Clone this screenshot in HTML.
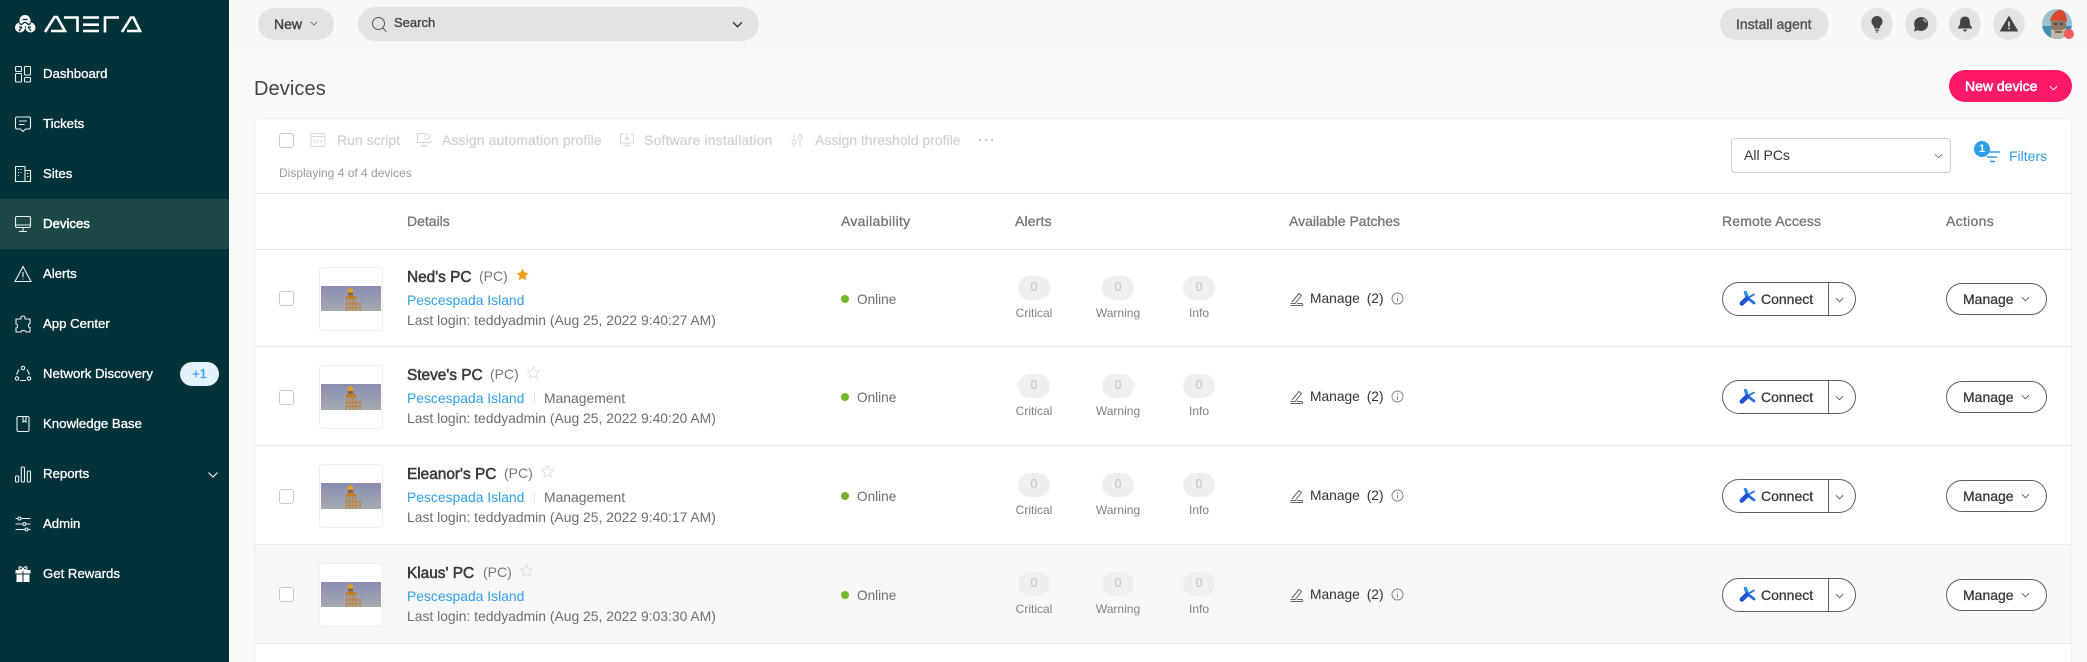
<!DOCTYPE html>
<html lang="en"><head><meta charset="utf-8"><title>Devices</title>
<style>
*{box-sizing:border-box}
html,body{margin:0;padding:0;width:2087px;height:662px;overflow:hidden;background:#fafafa;font-family:"Liberation Sans",Arial,sans-serif}
.a,.t{position:absolute}
.t{white-space:nowrap;line-height:20px;height:20px}
.nav{left:43px;color:#fff;font-size:13.2px;-webkit-text-stroke:.3px #fff}
.ni{position:absolute;left:14px;width:18px;height:18px;fill:none;stroke:#e8eeee;stroke-width:1.1}
.tb{color:#d2d2d2;font-size:14px;-webkit-text-stroke:.25px #d2d2d2}
.ti{position:absolute;width:16px;height:16px;fill:none;stroke:#d8d8d8;stroke-width:1}
.th{color:#777;font-size:14px;-webkit-text-stroke:.35px #777;top:212px}
.cb{position:absolute;left:24px;width:15px;height:15px;border:1px solid #c9c9c9;border-radius:3px;background:#fff}
.row{position:absolute;left:1px;width:1816px;border-bottom:1px solid #eaeaea}
.thumb{position:absolute;left:64px;top:18px;width:64px;height:64px;border:1px solid #eee;border-radius:4px;background:#fff}
.thumb svg{position:absolute;left:1px;top:18px;width:60px;height:26px}
.name{left:152px;top:19px;font-size:15.4px;color:#3c3c3c;-webkit-text-stroke:.55px #3c3c3c}
.pc{top:17px;font-size:14px;color:#777}
.st{position:absolute;top:18px;width:15px;height:15px}
.site{left:152px;top:41px;font-size:13.9px;color:#2e9fec}
.sep{position:absolute;left:279px;top:45px;width:1px;height:12px;background:#e6e6e6}
.mg{left:289px;top:41px;font-size:13.9px;color:#6e6e6e}
.ll{left:152px;top:61px;font-size:13.9px;color:#6e6e6e}
.dot{position:absolute;left:586px;top:46px;width:8px;height:8px;border-radius:50%;background:#76b82a}
.on{left:602px;top:41px;font-size:13.6px;color:#6e6e6e}
.pill{position:absolute;top:27px;width:32px;height:24px;border-radius:12px;background:#efefef;color:#c9c9c9;font-size:12.5px;line-height:23px;text-align:center;-webkit-text-stroke:.3px #c9c9c9}
.lab{top:54px;font-size:12px;color:#808080;text-align:center;width:60px}
.pi{position:absolute;left:1034px;top:42px;width:16px;height:16px;fill:none;stroke:#666;stroke-width:1}
.pm{left:1055px;top:40px;font-size:13.8px;color:#333;word-spacing:3px}
.info{position:absolute;left:1136px;top:43px;width:13px;height:13px;fill:none;stroke:#888;stroke-width:1}
.conn{position:absolute;left:1467px;top:33px;width:134px;height:34px;border:1px solid #5e5e5e;border-radius:17px;background:#fff}
.conn i{position:absolute;left:105px;top:0;width:1px;height:32px;background:#5e5e5e}
.conn svg.l{position:absolute;left:16px;top:7px;width:17px;height:17px}
.ct{left:38px;top:6px;font-size:14px;color:#3a3a3a;-webkit-text-stroke:.3px #3a3a3a}
.chev{position:absolute;fill:none}
.man{position:absolute;left:1691px;top:34px;width:101px;height:32px;border:1px solid #5e5e5e;border-radius:16px;background:#fff}
.mt{left:16px;top:5px;font-size:14px;color:#3a3a3a;-webkit-text-stroke:.3px #3a3a3a}
.btn{position:absolute;background:#e3e3e3;border-radius:17px}
.circ{position:absolute;top:8px;width:32px;height:32px;border-radius:50%;background:#e3e3e3}
.circ svg{position:absolute;left:6px;top:6px;width:20px;height:20px;fill:#444}
</style></head><body>

<svg width="0" height="0" style="position:absolute">
<defs>
<linearGradient id="sky" x1="0" y1="0" x2="0" y2="1"><stop offset="0" stop-color="#8a8cb2"/><stop offset="1" stop-color="#a4abb0"/></linearGradient>
<symbol id="tower" viewBox="0 0 60 26" preserveAspectRatio="none">
<rect width="60" height="26" fill="url(#sky)"/>
<path d="M26 6.500C27 3.500 28.500 3 29.500 1.500 30.500 3 32 3.500 33 6.500Z" fill="#eaa014"/>
<path d="M27 7h5v3h-5Z" fill="#8f6030"/>
<path d="M25 10.500h10v3H25Z" fill="#c47c1c"/>
<path d="M25.500 14v12M29 14v12M32 14v12M35 14v12M39 18v8M25 18.500h15M25 22.500h15" stroke="#c4802a" stroke-width="1.100" fill="none"/>
</symbol>
<symbol id="sempty" viewBox="0 0 24 24"><path d="M12 2.500l2.900 6.300 6.800.8-5 4.700 1.300 6.800-6-3.400-6 3.400 1.300-6.800-5-4.700 6.800-.8z" fill="none" stroke="#dcdcdc" stroke-width="1.400"/></symbol>
<symbol id="sfull" viewBox="0 0 24 24"><path d="M12 2.500l2.900 6.300 6.800.8-5 4.700 1.300 6.800-6-3.400-6 3.400 1.300-6.800-5-4.700 6.800-.8z" fill="#f59c1a"/></symbol>
<symbol id="patch" viewBox="0 0 16 16"><path d="M3 11 10 2.500l2.500 2L6.200 12.500H1.500M1.500 14.500h11.500c1 0 1-2-.5-2H8"/></symbol>
<symbol id="inf" viewBox="0 0 13 13"><circle cx="6.500" cy="6.500" r="5.500"/><path d="M6.500 6v3.600M6.500 3.400v1.200"/></symbol>
<symbol id="splash" viewBox="0 0 17 17">
<g fill="none" stroke-linecap="round">
<path d="M6.500 2.500 8.500 8" stroke="#2f8ee8" stroke-width="3.400"/>
<path d="M9 8.500 15 13" stroke="#2a6fdc" stroke-width="2.800"/>
<path d="M10.500 7 15 4.500" stroke="#2a6fdc" stroke-width="1.700"/>
<path d="M2.800 13.500 8 8.500" stroke="#1f55d2" stroke-width="4.600"/>
</g>
</symbol>
<symbol id="cv" viewBox="0 0 10 6"><path d="M1 1l4 4 4-4" fill="none" stroke="#555" stroke-width="1"/></symbol>
</defs>
</svg>

<!-- sidebar -->
<div class="a" style="left:0;top:0;width:229px;height:662px;background:#033238"></div>
<div class="a" style="left:0;top:199px;width:229px;height:50px;background:#1e4748"></div>

<svg class="a" style="left:14px;top:13px;width:128px;height:24px" viewBox="0 0 128 24" fill="none">
<title>ATERA</title>
<circle cx="11" cy="7.500" r="5.500" fill="#fff"/><circle cx="6" cy="14.500" r="5" fill="#fff"/><circle cx="16.500" cy="14.500" r="5" fill="#fff"/>
<path d="M8.500 6.500h5M11 9l-3.500 2.500L5 10.500M11 9l3.500 2.500L17 10.500M8 14l-3 4M14 14l3 4M8 14h-3M14 14h3" stroke="#033238" stroke-width="1.300"/>
<g stroke="#fff" stroke-width="2.600">
<path d="M31 19 40.500 4h2.500L51 18H37"/>
<path d="M50 4.500h13.500V19"/>
<path d="M69 4.500h16M69 11.700h16M69 18h16"/>
<path d="M91 19.500V4.500h14"/>
<path d="M108 19 117 4.500h2.500L126 18H113"/>
</g>
</svg>

<svg class="ni" style="top:65px" viewBox="0 0 18 18"><rect x="1.500" y="1.500" width="6" height="5" rx="1"/><rect x="10.500" y="1.500" width="6" height="8.500" rx="1"/><rect x="1.500" y="8.500" width="6" height="8.500" rx="1"/><rect x="10.500" y="12.500" width="6" height="4.500" rx="1"/></svg>
<div class="t nav" style="top:64px">Dashboard</div>
<svg class="ni" style="top:115px" viewBox="0 0 18 18"><path d="M3 2h12a1.500 1.500 0 0 1 1.500 1.500v9A1.500 1.500 0 0 1 15 14h-3.500L9 16.500 6.500 14H3a1.500 1.500 0 0 1-1.500-1.500v-9A1.500 1.500 0 0 1 3 2ZM5 6h8M5 9.500h5.500"/></svg>
<div class="t nav" style="top:114px">Tickets</div>
<svg class="ni" style="top:165px" viewBox="0 0 18 18"><path d="M1.500 1.500h9.500v15H1.500ZM11 5.500h5.500v11H11M4 4.500h1M6.500 4.500h1M4 7.500h1M6.500 7.500h1M4 10.500h1M13 8.500h1.500M13 11.500h1.500"/></svg>
<div class="t nav" style="top:164px">Sites</div>
<svg class="ni" style="top:215px" viewBox="0 0 18 18"><rect x="1.500" y="1.500" width="15" height="11" rx="1.500"/><path d="M1.500 10h15M9 13v3M5 16.500h8" /></svg>
<div class="t nav" style="top:214px;-webkit-text-stroke:.5px #fff">Devices</div>
<svg class="ni" style="top:265px" viewBox="0 0 18 18"><path d="M9 1.500 17 16.500H1ZM9 7v5M9 13.500v1"/></svg>
<div class="t nav" style="top:264px">Alerts</div>
<svg class="ni" style="top:315px" viewBox="0 0 18 18"><path d="M7 2.500c0-2 4-2 4 0V4h5v4.500c-2 0-2 4 0 4V17h-4c0-2-5-2-5 0H2v-4c2 0 2-4 0-4V4h5Z"/></svg>
<div class="t nav" style="top:314px">App Center</div>
<svg class="ni" style="top:365px" viewBox="0 0 18 18"><circle cx="9" cy="3" r="1.700"/><circle cx="3" cy="13.500" r="1.700"/><circle cx="15" cy="13.500" r="1.700"/><path d="M5 4.500 2.500 9.500M13 4.500 15.500 9.500M6 15.500h6"/></svg>
<div class="t nav" style="top:364px">Network Discovery</div>
<div class="a" style="left:180px;top:362px;width:39px;height:24px;border-radius:12px;background:#e3f1fb;color:#3aa0e8;font-size:13px;line-height:24px;text-align:center;-webkit-text-stroke:.3px #3aa0e8">+1</div>
<svg class="ni" style="top:415px" viewBox="0 0 18 18"><rect x="3" y="1.500" width="12" height="15" rx="1.500"/><path d="M9 2v5l1.500-1L12 7V2"/></svg>
<div class="t nav" style="top:414px">Knowledge Base</div>
<svg class="ni" style="top:465px" viewBox="0 0 18 18"><rect x="1.500" y="11" width="3.200" height="6" rx="1"/><rect x="7.300" y="2" width="3.200" height="15" rx="1"/><rect x="13.300" y="6" width="3.200" height="11" rx="1"/></svg>
<div class="t nav" style="top:464px">Reports</div>
<svg class="chev" style="left:208px;top:472px;width:10px;height:6px" viewBox="0 0 10 6"><path d="M.5.500 5 5 9.500.5" stroke="#fff" stroke-width="1"/></svg>
<svg class="ni" style="top:515px" viewBox="0 0 18 18"><path d="M1.500 3.500h2.500M7 3.500h9.500M1.500 9h7M12 9h4.500M1.500 14.500h9M14 14.500h2.500"/><circle cx="5.500" cy="3.500" r="1.500"/><circle cx="10.300" cy="9" r="1.500"/><circle cx="12.500" cy="14.500" r="1.500"/></svg>
<div class="t nav" style="top:514px">Admin</div>
<svg class="ni" style="top:565px;stroke:none;fill:#fff" viewBox="0 0 18 18"><path d="M1.500 5h7v3.500h-7ZM9.500 5h7v3.500h-7ZM2.500 9.500h6v7.500h-6ZM9.500 9.500h6v7.500h-6Z"/><path d="M9 5C6 5 4.500 4 5 2.500S8 1.500 9 5c1-3.500 3.500-4 4-2.500S12 5 9 5Z" fill="none" stroke="#fff"/></svg>
<div class="t nav" style="top:564px">Get Rewards</div>

<!-- topbar -->
<div class="a" style="left:229px;top:0;width:1858px;height:50px;background:#f8f8f8"></div>
<div class="btn" style="left:258px;top:8px;width:76px;height:32px"></div>
<div class="t" style="left:274px;top:14px;font-size:14px;color:#444;-webkit-text-stroke:.4px #444">New</div>
<svg class="chev" style="left:310px;top:21px;width:8px;height:5px" viewBox="0 0 10 6"><use href="#cv"/></svg>
<div class="btn" style="left:358px;top:7px;width:401px;height:34px"></div>
<svg class="a" style="left:371px;top:16px;width:17px;height:17px" viewBox="0 0 17 17" fill="none" stroke="#555" stroke-width="1"><circle cx="7.500" cy="7.500" r="6"/><path d="M11.800 11.800 15.500 15.800"/></svg>
<div class="t" style="left:394px;top:13px;font-size:13px;color:#444;-webkit-text-stroke:.35px #444">Search</div>
<svg class="chev" style="left:732px;top:21px;width:11px;height:7px" viewBox="0 0 10 6"><path d="M1 1l4 4 4-4" stroke="#333" stroke-width="1.300"/></svg>

<div class="btn" style="left:1720px;top:8px;width:109px;height:32px"></div>
<div class="t" style="left:1736px;top:14px;font-size:14px;color:#555;-webkit-text-stroke:.4px #555">Install agent</div>
<div class="circ" style="left:1861px"><svg viewBox="0 0 20 20"><path d="M10 2a5.500 5.500 0 0 0-3.200 10l.7 2.500h5l.7-2.500A5.500 5.500 0 0 0 10 2ZM8 15.500h4v1.200H8ZM8.800 17.500h2.400v1H8.800Z"/></svg></div>
<div class="circ" style="left:1905px"><svg viewBox="0 0 20 20"><path d="M10 3a7 7 0 0 0-6 10.500L3 17.500l4-1.200A7 7 0 1 0 10 3Z"/><path d="M12 5.500c1.500.3 2.500 1.500 2.800 3" stroke="#e3e3e3" fill="none"/></svg></div>
<div class="circ" style="left:1949px"><svg viewBox="0 0 20 20"><path d="M10 2.500c-3 0-4.800 2.200-4.800 5 0 4-1.700 5-2.200 6v1h14v-1c-.5-1-2.200-2-2.200-6 0-2.800-1.800-5-4.800-5ZM8.200 15.500h3.600A1.800 1.800 0 0 1 10 17.500a1.800 1.800 0 0 1-1.800-2Z"/></svg></div>
<div class="circ" style="left:1993px"><svg viewBox="0 0 20 20"><path d="M10 2.500 18.500 17h-17Z" stroke="#444" stroke-linejoin="round"/><path d="M10 7.500v5M10 13.800v1.500" stroke="#e3e3e3" stroke-width="1.600"/></svg></div>
<svg class="a" style="left:2042px;top:9px;width:36px;height:36px" viewBox="0 0 36 36">
<defs><clipPath id="av"><circle cx="15" cy="15" r="15"/></clipPath></defs>
<g clip-path="url(#av)"><rect width="30" height="30" fill="#9cc0cc"/><rect y="17" width="30" height="13" fill="#3f8fb5"/>
<path d="M8 12C9 6 14 0 20 1c3 2 5 6 5 12-5-2-11-2-17-1Z" fill="#d9472c"/>
<path d="M9 12c5-1 10-1 15 1v7c0 6-3 10-7 10s-8-4-8-10Z" fill="#8f7660"/><path d="M9 20c3 2 11 2 15-1v11H9Z" fill="#bdb7aa"/><path d="M12 15h3M18 15h3" stroke="#333" stroke-width="1.400"/><path d="M13 23h7" stroke="#5a4a3c" stroke-width="1.500"/></g>
<circle cx="27" cy="25" r="5" fill="#f45b5b"/></svg>

<!-- heading -->
<div class="t" style="left:254px;top:78px;font-size:20px;line-height:22px;height:22px;color:#444;letter-spacing:.1px">Devices</div>
<div class="a" style="left:1949px;top:70px;width:123px;height:32px;border-radius:16px;background:#fe1a68"></div>
<div class="t" style="left:1965px;top:76px;font-size:14px;color:#fff;-webkit-text-stroke:.5px #fff">New device</div>
<svg class="chev" style="left:2049px;top:85px;width:9px;height:6px" viewBox="0 0 10 6"><path d="M1 1l4 4 4-4" stroke="#fff" stroke-width="1"/></svg>

<!-- card -->
<div class="a" style="left:254px;top:118px;width:1818px;height:544px;background:#fff;border:1px solid #f1f1f1;border-bottom:0;border-radius:4px 4px 0 0"></div>
<div class="a" style="left:255px;top:193px;width:1816px;height:1px;background:#e6e6e6"></div>
<div class="a" style="left:255px;top:249px;width:1816px;height:1px;background:#e6e6e6"></div>

<div class="cb" style="left:279px;top:133px"></div>
<svg class="ti" style="left:310px;top:132px" viewBox="0 0 16 16"><rect x="1" y="1.500" width="14" height="13" rx="1"/><path d="M1 4.500h14M5.500 8 4 9.500 5.500 11M10.500 8 12 9.500 10.500 11M8.800 7.500 7.200 11.500"/></svg>
<div class="t tb" style="left:337px;top:130px">Run script</div>
<svg class="ti" style="left:416px;top:132px" viewBox="0 0 16 16"><path d="M9 1.500H1.500v9h13V8M8 10.500v3M4 14h8"/><circle cx="11" cy="4.500" r="2.500"/></svg>
<div class="t tb" style="left:442px;top:130px;letter-spacing:.1px">Assign automation profile</div>
<svg class="ti" style="left:619px;top:132px" viewBox="0 0 16 16"><path d="M5 2H1.500v9h13V2H11M8 1v6.500M5.500 5.500 8 8l2.500-2.500M8 11v3M4 14h8"/></svg>
<div class="t tb" style="left:644px;top:130px;letter-spacing:.15px">Software installation</div>
<svg class="ti" style="left:789px;top:132px" viewBox="0 0 16 16"><path d="M5 1v7M5 12v3M11 1v2M11 7v8"/><circle cx="5" cy="10" r="2"/><circle cx="11" cy="5" r="2"/></svg>
<div class="t tb" style="left:815px;top:130px">Assign threshold profile</div>
<svg class="a" style="left:978px;top:138px;width:16px;height:4px" viewBox="0 0 16 4" fill="#c8c8c8"><circle cx="2" cy="2" r="1.200"/><circle cx="8" cy="2" r="1.200"/><circle cx="14" cy="2" r="1.200"/></svg>
<div class="t" style="left:279px;top:163px;font-size:12px;color:#9a9a9a">Displaying 4 of 4 devices</div>

<div class="a" style="left:1731px;top:138px;width:220px;height:35px;border:1px solid #cfcfcf;border-radius:4px;background:#fff"></div>
<div class="t" style="left:1744px;top:145px;font-size:14px;color:#333">All PCs</div>
<svg class="chev" style="left:1934px;top:153px;width:9px;height:6px" viewBox="0 0 10 6"><path d="M1 1l4 4 4-4" stroke="#777" stroke-width="1"/></svg>
<svg class="a" style="left:1974px;top:141px;width:28px;height:22px" viewBox="0 0 28 22"><path d="M10 11h16M13 16h10M16 20.500h5" stroke="#2c9ee8" stroke-width="1.400"/><circle cx="8" cy="8" r="8" fill="#2c9ee8"/></svg>
<div class="a" style="left:1974px;top:141px;width:16px;height:16px;line-height:16px;text-align:center;color:#fff;font-size:11px;font-weight:bold">1</div>
<div class="t" style="left:2009px;top:146px;font-size:14px;color:#2e9fec">Filters</div>

<div class="t th" style="left:407px;top:211px">Details</div>
<div class="t th" style="left:841px;top:211px;letter-spacing:.3px">Availability</div>
<div class="t th" style="left:1015px;top:211px;letter-spacing:.15px">Alerts</div>
<div class="t th" style="left:1289px;top:211px">Available Patches</div>
<div class="t th" style="left:1722px;top:211px;letter-spacing:.15px">Remote Access</div>
<div class="t th" style="left:1946px;top:211px;letter-spacing:.3px">Actions</div>

<!-- ROW 1 -->
<div class="row" style="left:255px;top:249px;height:98px">
<div class="cb" style="top:42px"></div><div class="thumb"><svg style="height:25px"><use href="#tower"/></svg></div>
<div class="t name">Ned's PC</div><div class="t pc" style="left:224px">(PC)</div><svg class="st" style="left:260px"><use href="#sfull"/></svg>
<div class="t site">Pescespada Island</div>
<div class="t ll">Last login: teddyadmin (Aug 25, 2022 9:40:27 AM)</div>
<div class="dot"></div><div class="t on">Online</div>
<div class="pill" style="left:763px">0</div><div class="pill" style="left:847px">0</div><div class="pill" style="left:928px">0</div>
<div class="t lab" style="left:749px">Critical</div><div class="t lab" style="left:833px">Warning</div><div class="t lab" style="left:914px">Info</div>
<svg class="pi"><use href="#patch"/></svg><div class="t pm">Manage (2)</div><svg class="info"><use href="#inf"/></svg>
<div class="conn"><i></i><svg class="l"><use href="#splash"/></svg><div class="t ct">Connect</div><svg class="chev" style="left:112px;top:14px;width:9px;height:6px" viewBox="0 0 10 6"><use href="#cv"/></svg></div>
<div class="man"><div class="t mt">Manage</div><svg class="chev" style="left:74px;top:12px;width:9px;height:6px" viewBox="0 0 10 6"><use href="#cv"/></svg></div>
</div>

<!-- ROW 2 -->
<div class="row" style="left:255px;top:347px;height:99px">
<div class="cb" style="top:43px"></div><div class="thumb"><svg><use href="#tower"/></svg></div>
<div class="t name">Steve's PC</div><div class="t pc" style="left:235px">(PC)</div><svg class="st" style="left:271px"><use href="#sempty"/></svg>
<div class="t site">Pescespada Island</div><div class="sep"></div><div class="t mg">Management</div>
<div class="t ll">Last login: teddyadmin (Aug 25, 2022 9:40:20 AM)</div>
<div class="dot"></div><div class="t on">Online</div>
<div class="pill" style="left:763px">0</div><div class="pill" style="left:847px">0</div><div class="pill" style="left:928px">0</div>
<div class="t lab" style="left:749px">Critical</div><div class="t lab" style="left:833px">Warning</div><div class="t lab" style="left:914px">Info</div>
<svg class="pi"><use href="#patch"/></svg><div class="t pm">Manage (2)</div><svg class="info"><use href="#inf"/></svg>
<div class="conn"><i></i><svg class="l"><use href="#splash"/></svg><div class="t ct">Connect</div><svg class="chev" style="left:112px;top:14px;width:9px;height:6px" viewBox="0 0 10 6"><use href="#cv"/></svg></div>
<div class="man"><div class="t mt">Manage</div><svg class="chev" style="left:74px;top:12px;width:9px;height:6px" viewBox="0 0 10 6"><use href="#cv"/></svg></div>
</div>

<!-- ROW 3 -->
<div class="row" style="left:255px;top:446px;height:99px">
<div class="cb" style="top:43px"></div><div class="thumb"><svg><use href="#tower"/></svg></div>
<div class="t name">Eleanor's PC</div><div class="t pc" style="left:249px">(PC)</div><svg class="st" style="left:285px"><use href="#sempty"/></svg>
<div class="t site">Pescespada Island</div><div class="sep"></div><div class="t mg">Management</div>
<div class="t ll">Last login: teddyadmin (Aug 25, 2022 9:40:17 AM)</div>
<div class="dot"></div><div class="t on">Online</div>
<div class="pill" style="left:763px">0</div><div class="pill" style="left:847px">0</div><div class="pill" style="left:928px">0</div>
<div class="t lab" style="left:749px">Critical</div><div class="t lab" style="left:833px">Warning</div><div class="t lab" style="left:914px">Info</div>
<svg class="pi"><use href="#patch"/></svg><div class="t pm">Manage (2)</div><svg class="info"><use href="#inf"/></svg>
<div class="conn"><i></i><svg class="l"><use href="#splash"/></svg><div class="t ct">Connect</div><svg class="chev" style="left:112px;top:14px;width:9px;height:6px" viewBox="0 0 10 6"><use href="#cv"/></svg></div>
<div class="man"><div class="t mt">Manage</div><svg class="chev" style="left:74px;top:12px;width:9px;height:6px" viewBox="0 0 10 6"><use href="#cv"/></svg></div>
</div>

<!-- ROW 4 -->
<div class="row" style="left:255px;top:545px;height:99px;background:#f8f8f8">
<div class="cb" style="top:42px"></div><div class="thumb"><svg style="height:25px"><use href="#tower"/></svg></div>
<div class="t name">Klaus' PC</div><div class="t pc" style="left:228px">(PC)</div><svg class="st" style="left:264px"><use href="#sempty"/></svg>
<div class="t site">Pescespada Island</div>
<div class="t ll">Last login: teddyadmin (Aug 25, 2022 9:03:30 AM)</div>
<div class="dot"></div><div class="t on">Online</div>
<div class="pill" style="left:763px">0</div><div class="pill" style="left:847px">0</div><div class="pill" style="left:928px">0</div>
<div class="t lab" style="left:749px">Critical</div><div class="t lab" style="left:833px">Warning</div><div class="t lab" style="left:914px">Info</div>
<svg class="pi"><use href="#patch"/></svg><div class="t pm">Manage (2)</div><svg class="info"><use href="#inf"/></svg>
<div class="conn"><i></i><svg class="l"><use href="#splash"/></svg><div class="t ct">Connect</div><svg class="chev" style="left:112px;top:14px;width:9px;height:6px" viewBox="0 0 10 6"><use href="#cv"/></svg></div>
<div class="man"><div class="t mt">Manage</div><svg class="chev" style="left:74px;top:12px;width:9px;height:6px" viewBox="0 0 10 6"><use href="#cv"/></svg></div>
</div>

</body></html>
